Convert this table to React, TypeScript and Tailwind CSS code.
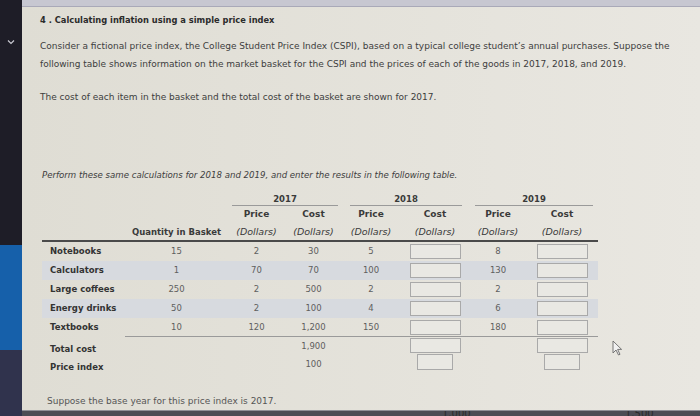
import React from 'react';

type Row = {
  label: string;
  q: string;
  p17: string;
  c17: string;
  p18: string;
  p19: string;
  shade?: boolean;
};

const rows: Row[] = [
  { label: 'Notebooks', q: '15', p17: '2', c17: '30', p18: '5', p19: '8' },
  { label: 'Calculators', q: '1', p17: '70', c17: '70', p18: '100', p19: '130', shade: true },
  { label: 'Large coffees', q: '250', p17: '2', c17: '500', p18: '2', p19: '2' },
  { label: 'Energy drinks', q: '50', p17: '2', c17: '100', p18: '4', p19: '6', shade: true },
  { label: 'Textbooks', q: '10', p17: '120', c17: '1,200', p18: '150', p19: '180' },
];

// column widths of the table, left to right
const cols = 'grid grid-cols-[83px_103px_57px_57px_58px_70px_56px_72px]';

function Box({ small }: { small?: boolean }) {
  return (
    <div className="flex justify-center">
      <div
        className={
          small
            ? 'w-[36px] h-[16px] border border-[#a9a9a9] bg-[#e9e8e3]'
            : 'w-[51px] h-[15px] border border-[#a9a9a9] bg-[#e9e8e3]'
        }
      />
    </div>
  );
}

export default function App() {
  return (
    <div className="w-[700px] h-[416px] flex overflow-hidden font-['DejaVu_Sans',sans-serif] text-[9px]">
      {/* left rail */}
      <div className="w-[22px] flex flex-col shrink-0">
        <div className="h-[245px] bg-[#1e1d27] flex justify-center pt-[39px]">
          <svg width="8" height="6" viewBox="0 0 8 6">
            <path d="M1 1.5 L4 4.5 L7 1.5" fill="none" stroke="#c9c9d2" strokeWidth="1.2" />
          </svg>
        </div>
        <div className="h-[105px] bg-[#1660aa]" />
        <div className="flex-1 bg-[#30334d]" />
      </div>

      <div className="flex-1 flex flex-col">
        <div className="h-[7px] bg-[#c7c7d1] border-b border-[#a9a9b8]" />

        <div className="flex-1 bg-gradient-to-r from-[#dfddd4] to-[#e9e7e1] pl-[18px] overflow-hidden relative">
          <h1 className="mt-[7px] leading-[12px] font-bold text-[#2b2b2b] text-[8.3px]">
            4 . Calculating inflation using a simple price index
          </h1>

          <p className="mt-[11px] leading-[18px] text-[#3d3d3d]">
            Consider a fictional price index, the College Student Price Index (CSPI), based on a typical college student’s annual purchases. Suppose the
            <br />
            following table shows information on the market basket for the CSPI and the prices of each of the goods in 2017, 2018, and 2019.
          </p>

          <p className="mt-[15px] leading-[18px] text-[#3d3d3d]">
            The cost of each item in the basket and the total cost of the basket are shown for 2017.
          </p>

          <p className="mt-[60px] leading-[18px] italic text-[#3d3d3d] ml-[2px] text-[8.6px]">
            Perform these same calculations for 2018 and 2019, and enter the results in the following table.
          </p>

          <div className="ml-[2px] mt-[9px] w-[556px] text-[8.5px]">
            {/* year headers */}
            <div className={`${cols} h-[13px] font-bold text-[#3a3a3a]`}>
              <div className="col-span-2" />
              <div className="col-span-2 mx-[4px] border-b border-[#9a9a9a] text-center leading-[12px]">2017</div>
              <div className="col-span-2 mx-[8px] border-b border-[#9a9a9a] text-center leading-[12px]">2018</div>
              <div className="col-span-2 mx-[5px] border-b border-[#9a9a9a] text-center leading-[12px]">2019</div>
            </div>
            <div className={`${cols} h-[18px] items-center font-bold text-[#3a3a3a] text-center text-[9px]`}>
              <div />
              <div />
              <div>Price</div>
              <div>Cost</div>
              <div>Price</div>
              <div>Cost</div>
              <div>Price</div>
              <div>Cost</div>
            </div>
            <div className={`${cols} h-[18px] items-center text-center text-[#3a3a3a] border-b-2 border-[#4a4a4a]`}>
              <div />
              <div className="font-bold">Quantity in Basket</div>
              <div className="italic text-[9.5px]">(Dollars)</div>
              <div className="italic text-[9.5px]">(Dollars)</div>
              <div className="italic text-[9.5px]">(Dollars)</div>
              <div className="italic text-[9.5px]">(Dollars)</div>
              <div className="italic text-[9.5px]">(Dollars)</div>
              <div className="italic text-[9.5px]">(Dollars)</div>
            </div>

            {rows.map((r, i) => (
              <div
                key={r.label}
                className={`${cols} items-center text-center text-[#5e5e5e] ${i === 4 ? 'h-[18px]' : 'h-[19px]'} ${r.shade ? 'bg-[#d7dadf]' : ''}`}
              >
                <div className="text-left pl-[8px] font-bold text-[#333]">{r.label}</div>
                <div>{r.q}</div>
                <div>{r.p17}</div>
                <div>{r.c17}</div>
                <div>{r.p18}</div>
                <Box />
                <div>{r.p19}</div>
                <Box />
              </div>
            ))}

            <div className={cols}>
              <div />
              <div className="col-span-7 border-b border-[#9a9a9a]" />
            </div>

            <div className={`${cols} h-[17px] items-start text-center text-[#5e5e5e] leading-[12px] pt-[1px]`}>
              <div className="text-left pl-[8px] font-bold text-[#333] pt-[5px]">Total cost</div>
              <div />
              <div />
              <div className="pt-[2px]">1,900</div>
              <div />
              <Box />
              <div />
              <Box />
            </div>
            <div className={`${cols} h-[22px] items-start text-center text-[#5e5e5e] leading-[12px]`}>
              <div className="text-left pl-[8px] font-bold text-[#333] pt-[7px]">Price index</div>
              <div />
              <div />
              <div className="pt-[4px]">100</div>
              <div />
              <Box small />
              <div />
              <Box small />
            </div>
          </div>

          <p className="mt-[19px] ml-[7px] leading-[12px] text-[#555]">
            Suppose the base year for this price index is 2017.
          </p>

          {/* mouse pointer */}
          <svg className="absolute left-[590px] top-[333px]" width="11" height="16" viewBox="0 0 11 16">
            <path
              d="M1 1 L1 13 L4 10 L6.5 15 L8 14.3 L5.6 9.4 L9.6 9.4 Z"
              fill="#f1f1f1"
              stroke="#6a6a6a"
              strokeWidth="0.9"
              strokeLinejoin="round"
            />
          </svg>
        </div>

        <div className="h-[6px] bg-[#4c4c54] border-t border-[#8f8f96] overflow-hidden relative">
          <span className="absolute left-[420px] -top-[2px] text-[10px] leading-[10px] text-[#2a2a2a]">1,000</span>
          <span className="absolute left-[603px] -top-[2px] text-[10px] leading-[10px] text-[#2a2a2a]">1,500</span>
        </div>
      </div>
    </div>
  );
}
